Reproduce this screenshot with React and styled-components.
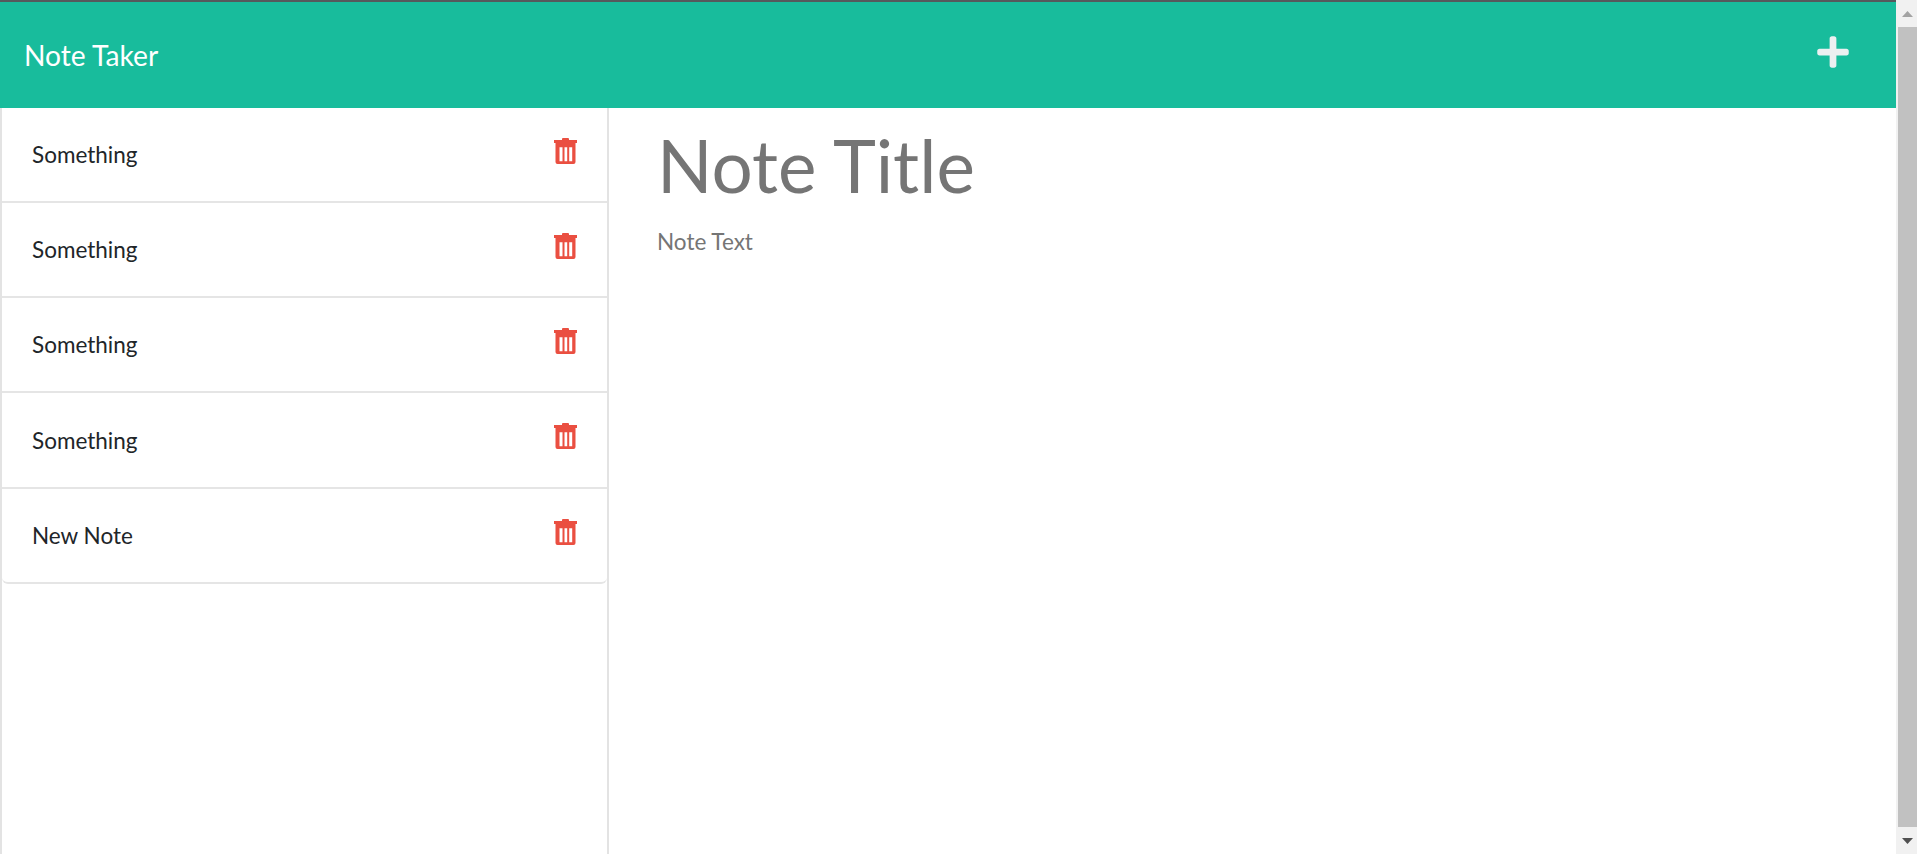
import React from "react";
import styled, { createGlobalStyle } from "styled-components";
import { FaPlus } from "react-icons/fa";

const GlobalStyle = createGlobalStyle`
    html, body {
        margin: 0;
        height: 100%;
        overflow: hidden;
        background-color: #fff;
    }
    body {
        font-family: "Lato", "Liberation Sans", sans-serif;
        font-size: 20px;
        color: #212529;
    }
`;

const Page = styled.div`
    display: flex;
    height: 854px;
    width: 1917px;
`;

const Main = styled.div`
    flex: 1;
    display: flex;
    flex-direction: column;
    min-width: 0;
`;

const Navbar = styled.nav`
    height: 106px;
    flex: none;
    box-sizing: content-box;
    border-top: 2px solid #55595c;
    background-color: #18bc9c;
    display: flex;
    align-items: center;
    justify-content: space-between;
    padding: 0 45px 0 24px;
`;

const Brand = styled.a`
    color: #fff;
    font-size: 28.2px;
    line-height: 32px;
`;

const AddIcon = styled(FaPlus)`
    color: #ecf0f1;
    font-size: 36px;
    display: block;
    margin-bottom: 6px;
`;

const Content = styled.div`
    flex: 1;
    display: flex;
    min-height: 0;
`;

const Sidebar = styled.div`
    width: 609px;
    flex: none;
    box-sizing: border-box;
    border-left: 2px solid #e3e3e3;
    border-right: 2px solid #e3e3e3;
`;

const NoteItem = styled.div`
    height: ${(props) => props.$height}px;
    box-sizing: border-box;
    display: flex;
    justify-content: space-between;
    align-items: center;
    padding: 0 30px 0 30px;
    border-bottom: 2px solid #e5e5e5;
    border-radius: ${(props) => (props.$last ? "0 0 6px 6px" : "0")};
`;

const NoteName = styled.span`
    font-size: 22.5px;
    line-height: 27px;
    color: #212529;
`;

const TrashSvg = styled.svg`
    width: 23px;
    height: 26px;
    display: block;
    margin-bottom: 8px;
    fill: #ea4f41;
`;

const Editor = styled.div`
    flex: 1;
    padding: 0 0 0 48px;
`;

const NoteTitle = styled.div`
    font-size: 72.8px;
    line-height: 86px;
    margin-top: 14px;
    color: #757575;
`;

const NoteText = styled.div`
    font-size: 22.5px;
    line-height: 27px;
    margin-top: 20px;
    color: #757575;
`;

const Scrollbar = styled.div`
    width: 21px;
    flex: none;
    display: flex;
    flex-direction: column;
    background-color: #f1f1f1;
`;

const ScrollButton = styled.div`
    height: 27px;
    flex: none;
    display: flex;
    align-items: center;
    justify-content: center;
    padding-left: 1px;
`;

const ScrollThumb = styled.div`
    flex: 1;
    margin-left: 2px;
    background-color: #c1c1c1;
`;

const Arrow = styled.svg`
    width: 11px;
    height: 6px;
    display: block;
    fill: ${(props) => props.$color};
`;

const notes = [
    { name: "Something", height: 95 },
    { name: "Something", height: 95 },
    { name: "Something", height: 95 },
    { name: "Something", height: 96 },
    { name: "New Note", height: 95, last: true },
];

// drawn by hand, the package trash icons have thinner walls than this one
function TrashIcon() {
    return (
        <TrashSvg viewBox="0 0 23 26">
            <path d="M9 0h5a1 1 0 0 1 1 1v1h8v3H0V2h8V1a1 1 0 0 1 1-1z" />
            <path
                fillRule="evenodd"
                d="M1.5 5h20v19a2 2 0 0 1-2 2h-16a2 2 0 0 1-2-2zM5.5 9.3v14h3v-14zM10.5 9.3v14h2.7v-14zM15.2 9.3v14h3v-14z"
            />
        </TrashSvg>
    );
}

function App() {
    return (
        <Page>
            <GlobalStyle />
            <Main>
                <Navbar>
                    <Brand>Note Taker</Brand>
                    <AddIcon />
                </Navbar>
                <Content>
                    <Sidebar>
                        {notes.map((note, i) => (
                            <NoteItem key={i} $height={note.height} $last={note.last}>
                                <NoteName>{note.name}</NoteName>
                                <TrashIcon />
                            </NoteItem>
                        ))}
                    </Sidebar>
                    <Editor>
                        <NoteTitle>Note Title</NoteTitle>
                        <NoteText>Note Text</NoteText>
                    </Editor>
                </Content>
            </Main>
            <Scrollbar>
                <ScrollButton>
                    <Arrow viewBox="0 0 11 6" $color="#a3a3a3">
                        <polygon points="5.5,0 11,6 0,6" />
                    </Arrow>
                </ScrollButton>
                <ScrollThumb />
                <ScrollButton>
                    <Arrow viewBox="0 0 11 6" $color="#505050">
                        <polygon points="0,0 11,0 5.5,6" />
                    </Arrow>
                </ScrollButton>
            </Scrollbar>
        </Page>
    );
}

export default App;
